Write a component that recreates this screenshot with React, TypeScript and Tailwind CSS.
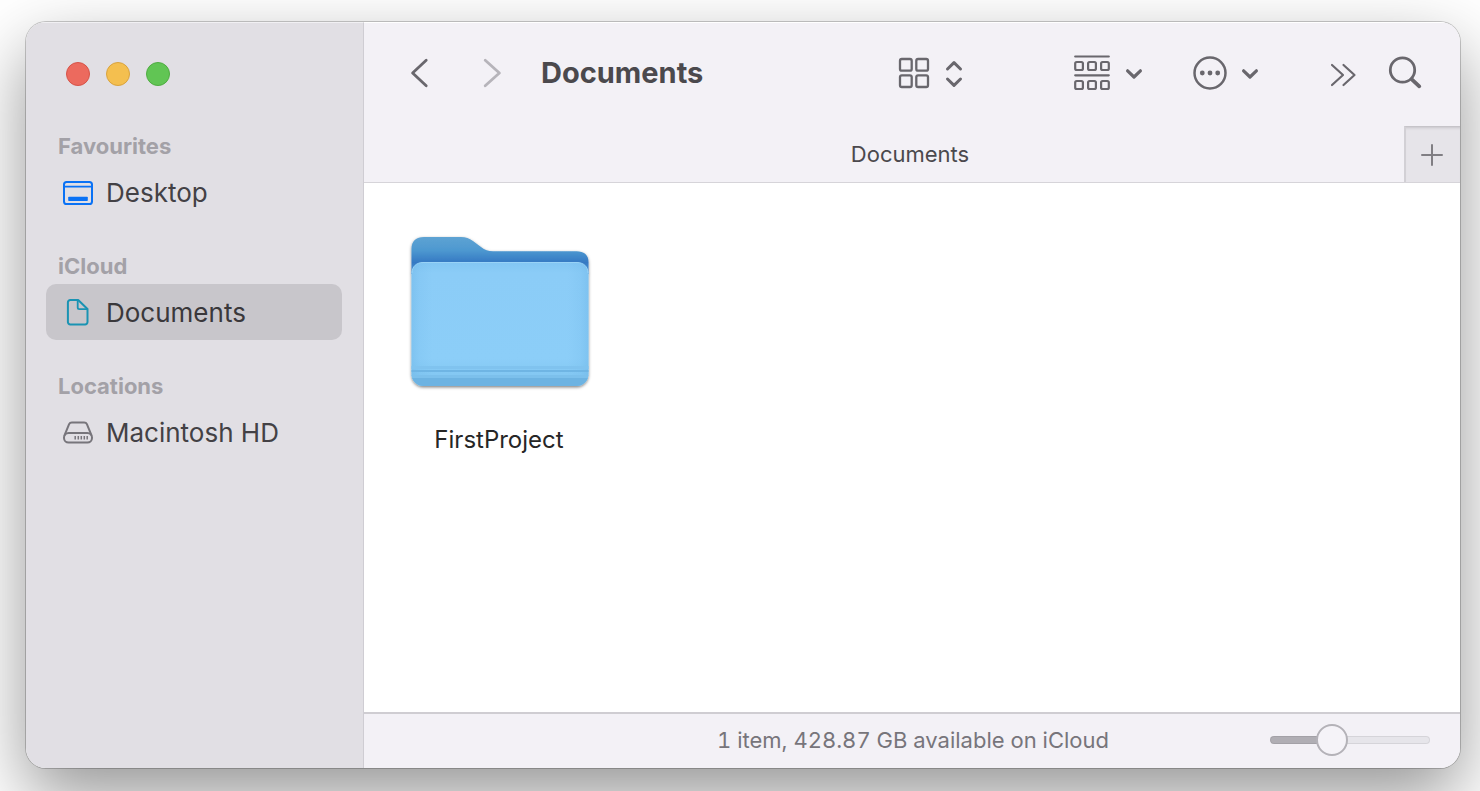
import { useState } from "react";
import type { CSSProperties, ReactNode } from "react";

function DesktopIcon() {
  return (
    <svg viewBox="0 -1 32 28" className="h-7 w-8" fill="none" aria-hidden="true">
      <rect x="2" y="3" width="28" height="22" rx="2.6" stroke="#0a72f5" strokeWidth="2" />
      <path d="M2 7.7h28" stroke="#0a72f5" strokeWidth="1.8" />
      <rect x="6.2" y="17.800" width="19.6" height="4.200" rx="0.8" fill="#0a72f5" />
    </svg>
  );
}

function DocumentIcon() {
  return (
    <svg viewBox="0 -1 32 28" className="h-7 w-8" fill="none" stroke="#1a93b3" strokeWidth="2" strokeLinejoin="round" aria-hidden="true">
      <path d="M8.3 1h7.9l9.3 9v13.1a2.4 2.4 0 0 1-2.4 2.4H8.3a2.4 2.4 0 0 1-2.4-2.4V3.400A2.4 2.4 0 0 1 8.3 1z" />
      <path d="M15.7 1.200v7.4a1.6 1.6 0 0 0 1.6 1.6h8" strokeWidth="1.8" />
    </svg>
  );
}

function DriveIcon() {
  return (
    <svg viewBox="0 -1 32 28" className="h-7 w-8" fill="none" stroke="#77757b" strokeWidth="2" strokeLinejoin="round" strokeLinecap="round" aria-hidden="true">
      <path d="M9.8 3.500h12.4c1.3 0 2.2.6 2.7 1.700l4.500 11M9.8 3.500c-1.3 0-2.2.6-2.7 1.700l-4.500 11" />
      <rect x="2" y="14" width="28" height="9.6" rx="4.6" />
      <path d="M13.2 17v3.600M16.3 17v3.600M19.3 17v3.600M22.3 17v3.600M25.2 17v3.600" strokeWidth="1.5" strokeLinecap="butt" />
    </svg>
  );
}

function ChevronDown() {
  return (
    <svg viewBox="0 -1 18 12" className="h-3 w-4.5 overflow-visible" fill="none" stroke="#69676d" strokeWidth="3.2" strokeLinecap="round" strokeLinejoin="round" aria-hidden="true">
      <path d="M2.6 2.8 9 9l6.4-6.2" />
    </svg>
  );
}

function GridIcon() {
  return (
    <svg viewBox="0 0 32 32" className="size-8" fill="none" stroke="#69676d" strokeWidth="2.3" aria-hidden="true">
      <rect x="2" y="2" width="11.7" height="11.7" rx="1.8" />
      <rect x="18.3" y="2" width="11.7" height="11.7" rx="1.8" />
      <rect x="2" y="18.3" width="11.7" height="11.7" rx="1.8" />
      <rect x="18.3" y="18.3" width="11.7" height="11.7" rx="1.8" />
    </svg>
  );
}

function UpDownIcon() {
  return (
    <svg viewBox="0 -1 18 28" className="h-7 w-4.5 overflow-visible" fill="none" stroke="#69676d" strokeWidth="3" strokeLinecap="round" strokeLinejoin="round" aria-hidden="true">
      <path d="M2.5 9 9 2.6 15.5 9M2.5 19 9 25.4l6.5-6.4" />
    </svg>
  );
}

function GroupIcon() {
  return (
    <svg viewBox="0 0 36 36" className="size-9" fill="none" stroke="#69676d" strokeWidth="2.2" strokeLinecap="round" aria-hidden="true">
      <path d="M1.2 1.5h33.6M1.2 20.3h33.6" />
      <rect x="1.2" y="7" width="7.7" height="8" rx="1.5" />
      <rect x="14.1" y="7" width="7.8" height="8" rx="1.5" />
      <rect x="27.1" y="7" width="7.7" height="8" rx="1.5" />
      <rect x="1.2" y="26" width="7.7" height="8" rx="1.5" />
      <rect x="14.1" y="26" width="7.8" height="8" rx="1.5" />
      <rect x="27.1" y="26" width="7.7" height="8" rx="1.5" />
    </svg>
  );
}

function EllipsisIcon() {
  return (
    <svg viewBox="0 0 34 34" className="size-8.5" fill="none" stroke="#69676d" strokeWidth="2.5" aria-hidden="true">
      <circle cx="17" cy="17" r="15.5" />
      <g fill="#69676d" stroke="none">
        <circle cx="9.3" cy="17" r="2.4" />
        <circle cx="17" cy="17" r="2.4" />
        <circle cx="24.7" cy="17" r="2.4" />
      </g>
    </svg>
  );
}

function FolderIcon() {
  return (
    <svg viewBox="-1 0 190 164" className="h-41 w-47.5" aria-hidden="true">
      <defs>
        <linearGradient id="back" gradientUnits="userSpaceOnUse" x1="0" y1="6" x2="0" y2="36">
          <stop offset="0" stopColor="#5ea3d3" />
          <stop offset="0.45" stopColor="#4d98d0" />
          <stop offset="0.85" stopColor="#3579c3" />
          <stop offset="1" stopColor="#3f86cb" />
        </linearGradient>
        <linearGradient id="front" x1="0" y1="0" x2="0" y2="1">
          <stop offset="0" stopColor="#82c6f3" />
          <stop offset="0.09" stopColor="#8bccf7" />
          <stop offset="0.78" stopColor="#8ccef8" />
          <stop offset="0.9" stopColor="#84c8f3" />
          <stop offset="1" stopColor="#84c6f1" />
        </linearGradient>
        <linearGradient id="sides" x1="0" y1="0" x2="1" y2="0">
          <stop offset="0" stopColor="#63aee2" stopOpacity="0.35" />
          <stop offset="0.05" stopColor="#63aee2" stopOpacity="0.12" />
          <stop offset="0.12" stopColor="#63aee2" stopOpacity="0" />
          <stop offset="0.88" stopColor="#63aee2" stopOpacity="0" />
          <stop offset="0.95" stopColor="#63aee2" stopOpacity="0.12" />
          <stop offset="1" stopColor="#63aee2" stopOpacity="0.35" />
        </linearGradient>
        <clipPath id="panel">
          <rect x="6.5" y="31" width="177" height="124" rx="12" />
        </clipPath>
        <filter id="drop" x="-10%" y="-10%" width="120%" height="120%">
          <feDropShadow dx="0" dy="1.3" stdDeviation="1.6" floodColor="#000" floodOpacity="0.5" />
        </filter>
      </defs>
      <g filter="url(#drop)">
        <path d="M6.5 43V18c0-8 4.5-12 12.5-12h37c5 0 8 1.3 12 4l8 6c4 3 7 4.3 12 4.3h83.5c8 0 12 4 12 11V43z" fill="url(#back)" />
        <rect x="6.5" y="31" width="177" height="124" rx="12" fill="url(#front)" />
      </g>
      <g clipPath="url(#panel)">
        <rect x="6" y="31" width="178" height="124" fill="url(#sides)" />
        <path d="M6 136.5h178" stroke="#80c3ef" strokeWidth="3" />
        <path d="M6 140h178" stroke="#6fb5e4" strokeWidth="2" />
        <path d="M6 145.5h178" stroke="#7cc0ec" strokeWidth="3" />
        <path d="M6 147h178v8H6z" fill="#6db3e2" />
      </g>
      <path d="M7 42c0-6.5 4.5-10.5 11-10.5h154c6.5 0 11 4 11 10.5" fill="none" stroke="#a0d7f8" strokeWidth="0.8" />
    </svg>
  );
}

function SidebarSection({ title, label, icon, active }: { title: string; label: string; icon: ReactNode; active?: boolean }) {
  return (
    <section>
      <h2 className="flex h-9 items-center px-3 text-[22px] font-bold text-[#a3a1a7]">{title}</h2>
      <a
        href="#"
        aria-current={active ? "page" : undefined}
        className={`flex h-14 items-center gap-3 rounded-[10px] px-4 text-[26px] ${active ? "bg-[#c8c6cb] text-[#3a383b]" : "text-[#434145]"}`}
      >
        {icon}
        <span>{label}</span>
      </a>
    </section>
  );
}

export default function App() {
  const [size, setSize] = useState(36);
  const slider: CSSProperties = {
    background: `linear-gradient(to right, #b0aeb4 ${size + 3}%, #e6e5ea ${size + 3}%)`,
  };

  return (
    <div className="flex h-screen min-h-[500px] overflow-hidden bg-white pt-[22px] pr-5 pb-[23px] pl-[26px] font-[Inter,'Noto_Sans',sans-serif]">
      <div className="flex min-w-0 flex-1 overflow-hidden rounded-[20px] bg-white shadow-[0_0_0_1px_rgba(0,0,0,0.2),0_28px_70px_rgba(0,0,0,0.42)]">
        <aside className="w-[338px] shrink-0 border-t border-r border-t-[#f1f0f3] border-r-[#cfcdd3] bg-[#e1dfe4] pr-[21px] pl-5">
          <div className="flex h-[105px] items-center gap-4 pb-1 pl-5">
            <button aria-label="Close" className="size-6 rounded-full border border-[#d65348] bg-[#ec6a5e]" />
            <button aria-label="Minimise" className="size-6 rounded-full border border-[#d9a33e] bg-[#f4bf4f]" />
            <button aria-label="Zoom" className="size-6 rounded-full border border-[#4fac41] bg-[#61c554]" />
          </div>
          <nav aria-label="Sidebar" className="flex flex-col gap-7">
            <SidebarSection title="Favourites" label="Desktop" icon={<DesktopIcon />} />
            <SidebarSection title="iCloud" label="Documents" icon={<DocumentIcon />} active />
            <SidebarSection title="Locations" label="Macintosh HD" icon={<DriveIcon />} />
          </nav>
        </aside>

        <main className="flex min-w-0 flex-1 flex-col">
          <header className="flex h-26 shrink-0 items-center border-t border-white bg-[#f3f1f6] pr-[38px] pb-[3px] pl-[46px]">
            <button aria-label="Back">
              <svg viewBox="0 0 20 32" className="h-8 w-5" fill="none" stroke="#69676d" strokeWidth="2.8" strokeLinecap="round" strokeLinejoin="round" aria-hidden="true">
                <path d="M16.2 3.2 2.6 16l13.6 12.8" />
              </svg>
            </button>
            <button aria-label="Forward" className="ml-[52px]">
              <svg viewBox="0 0 20 32" className="h-8 w-5" fill="none" stroke="#b6b4ba" strokeWidth="2.8" strokeLinecap="round" strokeLinejoin="round" aria-hidden="true">
                <path d="M3.2 3.2 17.4 16 3.2 28.8" />
              </svg>
            </button>
            <h1 className="ml-[39px] text-[29px] font-bold text-[#4b494d]">Documents</h1>
            <div className="ml-auto flex items-center">
              <button aria-label="View" className="flex items-center gap-[15px]">
                <GridIcon />
                <UpDownIcon />
              </button>
              <button aria-label="Group" className="ml-[111px] flex items-center gap-[15px]">
                <GroupIcon />
                <ChevronDown />
              </button>
              <button aria-label="Actions" className="ml-[50px] flex items-center gap-[14px]">
                <EllipsisIcon />
                <ChevronDown />
              </button>
              <button aria-label="More toolbar items" className="ml-[70px]">
                <svg viewBox="0 0 28 24" className="mt-1 h-6 w-7" fill="none" stroke="#69676d" strokeWidth="2.2" strokeLinecap="round" strokeLinejoin="round" aria-hidden="true">
                  <path d="M3 2l11 10L3 22M14.5 2l11 10-11 10" />
                </svg>
              </button>
              <button aria-label="Search" className="ml-[31px]">
                <svg viewBox="0 0 34 34" className="size-8.5" fill="none" stroke="#69676d" strokeLinecap="round" aria-hidden="true">
                  <circle cx="14.5" cy="14" r="12.2" strokeWidth="2.8" />
                  <path d="m23.8 23.3 7.5 7" strokeWidth="3.8" />
                </svg>
              </button>
            </div>
          </header>

          <div className="grid h-[57px] shrink-0 grid-cols-[56px_1fr_56px] border-b border-[#d6d4d9] bg-[#f3f1f6]">
            <div className="col-start-2 flex items-center justify-center pr-1 text-[22px] text-[#4b494d]">Documents</div>
            <button aria-label="New tab" className="flex items-center justify-center border-t border-l-2 border-t-[#c6c4c9] border-l-[#d2d0d5] bg-[#e6e4e9] pt-px pr-0.5 shadow-[inset_0_3px_3px_-2px_rgba(0,0,0,0.14)]">
              <svg viewBox="0 0 22 22" className="size-5.5" stroke="#807e83" strokeWidth="2" strokeLinecap="round" aria-hidden="true">
                <path d="M11 1v20M1 11h20" />
              </svg>
            </button>
          </div>

          <div className="flex min-h-0 flex-1 items-start bg-white px-10 pt-12">
            <button className="flex flex-col items-center gap-[29px]">
              <FolderIcon />
              <span className="text-2xl text-[#262626]">FirstProject</span>
            </button>
          </div>

          <footer className="grid h-14 shrink-0 grid-cols-[1fr_auto_1fr] items-center border-t-2 border-[#cfcdd2] bg-[#f3f1f6] pr-[30px] pb-0.5 pl-8">
            <p className="col-start-2 text-[22px] text-[#77757b] tabular-nums">1 item, 428.87 GB available on iCloud</p>
            <input
              type="range"
              aria-label="Icon size"
              min={0}
              max={100}
              value={size}
              onChange={(event) => setSize(Number(event.target.value))}
              style={slider}
              className="h-2 w-40 appearance-none justify-self-end rounded-full inset-ring inset-ring-black/7 [&::-webkit-slider-runnable-track]:h-2 [&::-webkit-slider-thumb]:-mt-3 [&::-webkit-slider-thumb]:size-8 [&::-webkit-slider-thumb]:appearance-none [&::-webkit-slider-thumb]:rounded-full [&::-webkit-slider-thumb]:border-2 [&::-webkit-slider-thumb]:border-[#b4b2b8] [&::-webkit-slider-thumb]:bg-[#f5f3f8]"
            />
          </footer>
        </main>
      </div>
    </div>
  );
}
